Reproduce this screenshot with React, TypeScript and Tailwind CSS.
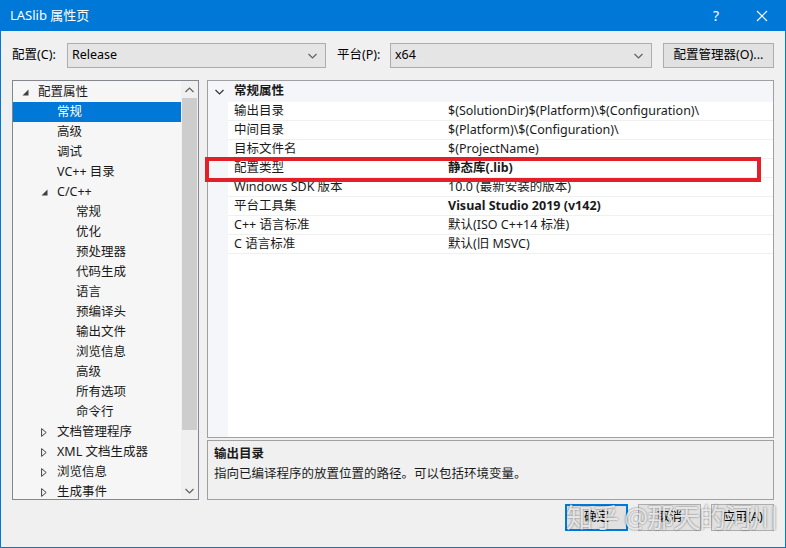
import React from 'react';

const FONT = "font-['Noto_Sans','Noto_Sans_CJK_SC',sans-serif]";

type TreeItem = { label: string; level: number; expanded?: boolean; selected?: boolean };

const treeItems: TreeItem[] = [
  { label: '配置属性', level: 0, expanded: true },
  { label: '常规', level: 1, selected: true },
  { label: '高级', level: 1 },
  { label: '调试', level: 1 },
  { label: 'VC++ 目录', level: 1 },
  { label: 'C/C++', level: 1, expanded: true },
  { label: '常规', level: 2 },
  { label: '优化', level: 2 },
  { label: '预处理器', level: 2 },
  { label: '代码生成', level: 2 },
  { label: '语言', level: 2 },
  { label: '预编译头', level: 2 },
  { label: '输出文件', level: 2 },
  { label: '浏览信息', level: 2 },
  { label: '高级', level: 2 },
  { label: '所有选项', level: 2 },
  { label: '命令行', level: 2 },
  { label: '文档管理程序', level: 1, expanded: false },
  { label: 'XML 文档生成器', level: 1, expanded: false },
  { label: '浏览信息', level: 1, expanded: false },
  { label: '生成事件', level: 1, expanded: false },
];

const props = [
  { name: '输出目录', value: '$(SolutionDir)$(Platform)\\$(Configuration)\\' },
  { name: '中间目录', value: '$(Platform)\\$(Configuration)\\' },
  { name: '目标文件名', value: '$(ProjectName)' },
  { name: '配置类型', value: '静态库(.lib)', bold: true },
  { name: 'Windows SDK 版本', value: '10.0 (最新安装的版本)' },
  { name: '平台工具集', value: 'Visual Studio 2019 (v142)', bold: true },
  { name: 'C++ 语言标准', value: '默认(ISO C++14 标准)' },
  { name: 'C 语言标准', value: '默认(旧 MSVC)' },
];

const Chevron = ({ up = false, color = '#606060' }: { up?: boolean; color?: string }) => (
  <svg width="9" height="6" viewBox="0 0 9 6">
    <polyline
      points={up ? '0.5,5 4.5,1 8.5,5' : '0.5,1 4.5,5 8.5,1'}
      fill="none"
      stroke={color}
      strokeWidth="1.2"
    />
  </svg>
);

const Combo = ({ value, width }: { value: string; width: string }) => (
  <div className={`${width} h-[25px] bg-[#e5e5e5] border border-[#adadad] flex items-center pl-[4px] pr-[8px]`}>
    <span className="flex-1 text-[12.5px] text-black">{value}</span>
    <Chevron />
  </div>
);

const TreeRow = ({ item }: { item: TreeItem }) => {
  const pad = ['pl-[9px]', 'pl-[28px]', 'pl-[47px]'][item.level];
  return (
    <div
      className={`h-[20px] shrink-0 flex items-center ${pad} ${
        item.selected ? 'bg-[#0078d7] text-white' : 'text-[#1a1a1a]'
      }`}
    >
      <span className="w-[16px] flex items-center">
        {item.expanded === true && (
          <svg width="7" height="7" viewBox="0 0 7 7">
            <polygon points="6.5,0.5 6.5,6.5 0.5,6.5" fill="#404040" />
          </svg>
        )}
        {item.expanded === false && (
          <svg width="6" height="9" viewBox="0 0 6 9">
            <polygon points="0.6,0.6 5.2,4.5 0.6,8.4" fill="none" stroke="#404040" strokeWidth="1" />
          </svg>
        )}
      </span>
      <span className="text-[12.5px] leading-none">{item.label}</span>
    </div>
  );
};

const Button = ({ label, primary = false }: { label: string; primary?: boolean }) => (
  <div
    className={`w-[63px] h-[27px] bg-[#e1e1e1] flex items-center justify-center text-[12.5px] text-black ${
      primary ? 'border-2 border-[#0078d7]' : 'border border-[#adadad]'
    }`}
  >
    {label}
  </div>
);

export default function App() {
  return (
    <div className={`w-[786px] h-[548px] bg-[#0078d7] px-px pb-px flex flex-col ${FONT} relative`}>
      {/* title bar */}
      <div className="h-[31px] flex items-center text-white">
        <span className="pl-[9px] text-[13px] flex-1">LASlib 属性页</span>
        <span className="text-[14px] w-[20px] text-center mr-[30px]">?</span>
        <svg width="12" height="12" viewBox="0 0 12 12" className="mr-[17px]">
          <path d="M1 1 L11 11 M11 1 L1 11" stroke="white" strokeWidth="1.2" />
        </svg>
      </div>

      {/* body */}
      <div className="flex-1 bg-[#f0f0f0] flex flex-col px-[11px]">
        <div className="mt-[12px] h-[25px] flex items-center">
          <span className="w-[55px] text-[12.5px] text-black">配置(C):</span>
          <Combo value="Release" width="w-[259px]" />
          <span className="ml-[11px] w-[53px] text-[12.5px] text-black">平台(P):</span>
          <Combo value="x64" width="w-[262px]" />
          <div className="ml-[11px] w-[111px] h-[25px] bg-[#e1e1e1] border border-[#adadad] flex items-center justify-center text-[12.5px] text-black">
            配置管理器(O)...
          </div>
        </div>

        <div className="mt-[12px] h-[420px] flex gap-[8px]">
          {/* tree */}
          <div className="w-[187px] border border-[#828790] bg-[#f6f6f6] flex overflow-hidden">
            <div className="flex-1 flex flex-col pt-[1px] overflow-hidden">
              {treeItems.map((it, i) => (
                <TreeRow key={i} item={it} />
              ))}
            </div>
            <div className="w-[17px] bg-[#f0f0f0] flex flex-col">
              <div className="h-[17px] flex items-center justify-center">
                <Chevron up />
              </div>
              <div className="flex-1">
                <div className="mx-[1px] h-[332px] bg-[#cdcdcd]" />
              </div>
              <div className="h-[17px] flex items-center justify-center">
                <Chevron />
              </div>
            </div>
          </div>

          {/* right side */}
          <div className="flex-1 flex flex-col gap-[2px]">
            <div className="h-[358px] border border-[#a0a0a0] bg-white flex flex-col">
              <div className="h-[21px] shrink-0 flex items-center bg-[#f4f6f9]">
                <span className="w-[20px] flex items-center justify-center pl-[2px]">
                  <Chevron color="#333333" />
                </span>
                <span className="pl-[6px] text-[12.5px] font-bold text-[#1a1a1a]">常规属性</span>
              </div>
              {props.map((p, i) => (
                <div key={i} className="h-[19px] shrink-0 flex">
                  <span className="w-[20px] bg-[#f4f6f9]" />
                  <div className="flex-1 flex items-center border-b border-[#f0f0f0]">
                    <span className="w-[214px] pl-[6px] text-[12.5px] text-[#1a1a1a] whitespace-nowrap">{p.name}</span>
                    <span
                      className={`pl-[6px] text-[12.5px] text-[#1a1a1a] whitespace-nowrap ${p.bold ? 'font-bold' : ''}`}
                    >
                      {p.value}
                    </span>
                  </div>
                </div>
              ))}
              <div className="flex-1 flex">
                <span className="w-[20px] bg-[#f4f6f9]" />
              </div>
            </div>
            <div className="flex-1 border border-[#a0a0a0] bg-[#f0f0f0] pl-[6px] pt-[4px] flex flex-col gap-[1px]">
              <span className="text-[12.5px] font-bold text-[#1a1a1a]">输出目录</span>
              <span className="text-[12.5px] text-[#1a1a1a]">指向已编译程序的放置位置的路径。可以包括环境变量。</span>
            </div>
          </div>
        </div>

        <div className="mt-[4px] flex justify-end gap-[10px]">
          <Button label="确定" primary />
          <Button label="取消" />
          <Button label="应用(A)" />
        </div>
      </div>

      {/* red highlight annotation */}
      <div className="absolute left-[205px] top-[157px] w-[556px] h-[25px] border-[4px] border-[#e3202a] pointer-events-none" />

      {/* watermark */}
      <div className="absolute left-[566px] top-[500px] text-[27px] leading-[36px] text-white/80 whitespace-nowrap tracking-[-1px] [text-shadow:0_0_2px_rgba(0,0,0,0.6)] pointer-events-none">
        知乎 @那天的河川
      </div>
    </div>
  );
}
